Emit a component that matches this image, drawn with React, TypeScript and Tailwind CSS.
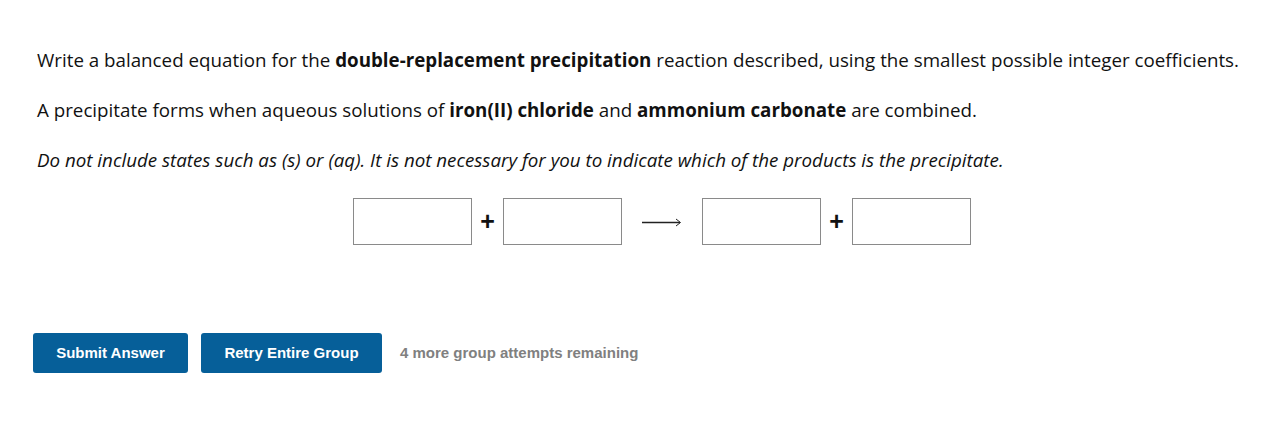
import React from "react";

function Box() {
    return <input className="w-[119px] h-[47px] border border-[#8a8a8a] bg-white outline-none" />;
}

export default function App() {
    return (
        <div className="w-[1262px] h-[447px] bg-white text-[#111]" style={{ fontFamily: '"Open Sans", sans-serif' }}>
            <div className="pl-[37px] pt-[47px] text-[18.75px] leading-[26px]">
                <p>
                    Write a balanced equation for the <b>double-replacement precipitation</b> reaction described, using the smallest possible integer coefficients.
                </p>
                <p className="mt-[24px]">
                    A precipitate forms when aqueous solutions of <b>iron(II) chloride</b> and <b>ammonium carbonate</b> are combined.
                </p>
                <p className="mt-[24px] italic">
                    Do not include states such as (s) or (aq). It is not necessary for you to indicate which of the products is the precipitate.
                </p>
            </div>
            <div className="flex items-center pl-[353px] mt-[25px]">
                <Box />
                <span className="w-[31px] text-center font-black text-[25px] leading-none" style={{ fontFamily: '"Liberation Sans", Arial, sans-serif' }}>+</span>
                <Box />
                <span className="w-[80px] flex justify-center">
                    <svg width="40" height="10" viewBox="0 0 40 10">
                        <path d="M0 5.5H38" stroke="#222" strokeWidth="1.3" />
                        <path d="M34 2 L38.5 5.5 L34 9" stroke="#222" strokeWidth="1" fill="none" />
                    </svg>
                </span>
                <Box />
                <span className="w-[31px] text-center font-black text-[25px] leading-none" style={{ fontFamily: '"Liberation Sans", Arial, sans-serif' }}>+</span>
                <Box />
            </div>
            <div className="flex items-center pl-[33px] mt-[88px]" style={{ fontFamily: '"Liberation Sans", Arial, sans-serif' }}>
                <button className="w-[155px] h-[40px] rounded-[3px] bg-[#065f99] text-white font-bold text-[15px]">Submit Answer</button>
                <button className="ml-[13px] w-[181px] h-[40px] rounded-[3px] bg-[#065f99] text-white font-bold text-[15px]">Retry Entire Group</button>
                <span className="ml-[18px] text-[#808080] font-bold text-[15px]">4 more group attempts remaining</span>
            </div>
        </div>
    );
}
